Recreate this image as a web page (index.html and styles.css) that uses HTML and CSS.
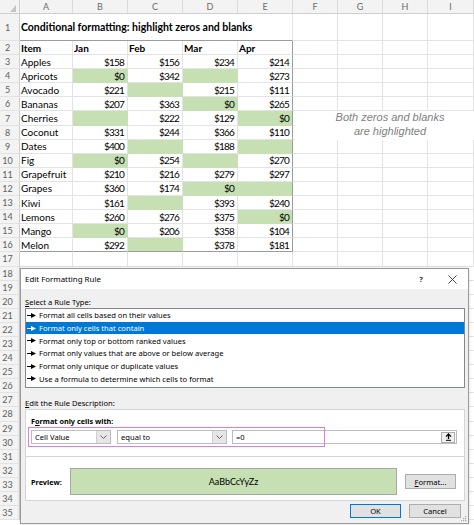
FILE: index.html
```html
<!DOCTYPE html>
<html>
<head>
<meta charset="utf-8">
<title>Conditional formatting</title>
<link rel="stylesheet" href="styles.css">
</head>
<body>
<div class="sheet">
  <div class="corner"><svg width="6" height="7" viewBox="0 0 6 7"><polygon points="6,0 6,7 0,7" fill="#c4c4c4"/></svg></div>
  <div class="ch">A</div><div class="ch">B</div><div class="ch">C</div><div class="ch">D</div><div class="ch">E</div><div class="ch">F</div><div class="ch">G</div><div class="ch">H</div><div class="ch">I</div>

  <div class="rh">1</div><div class="title">Conditional formatting: highlight zeros and blanks</div><div class="c"></div><div class="c"></div><div class="c"></div><div class="c"></div>

  <div class="rh">2</div><div class="c bold">Item</div><div class="c bold">Jan</div><div class="c bold">Feb</div><div class="c bold">Mar</div><div class="c bold e">Apr</div><div class="c"></div><div class="c"></div><div class="c"></div><div class="c"></div>

  <div class="rh">3</div><div class="c">Apples</div><div class="c n">$158</div><div class="c n">$156</div><div class="c n">$234</div><div class="c n e">$214</div><div class="c"></div><div class="c"></div><div class="c"></div><div class="c"></div>

  <div class="rh">4</div><div class="c">Apricots</div><div class="c n g">$0</div><div class="c n">$342</div><div class="c n g"></div><div class="c n e">$273</div><div class="c"></div><div class="c"></div><div class="c"></div><div class="c"></div>

  <div class="rh">5</div><div class="c">Avocado</div><div class="c n">$221</div><div class="c n g"></div><div class="c n">$215</div><div class="c n e">$111</div><div class="c"></div><div class="c"></div><div class="c"></div><div class="c"></div>

  <div class="rh">6</div><div class="c">Bananas</div><div class="c n">$207</div><div class="c n">$363</div><div class="c n g">$0</div><div class="c n e">$265</div><div class="c"></div><div class="c"></div><div class="c"></div><div class="c"></div>

  <div class="rh">7</div><div class="c">Cherries</div><div class="c n g"></div><div class="c n">$222</div><div class="c n">$129</div><div class="c n g e">$0</div><div class="c"></div><div class="c"></div><div class="c"></div><div class="c"></div>

  <div class="rh">8</div><div class="c">Coconut</div><div class="c n">$331</div><div class="c n">$244</div><div class="c n">$366</div><div class="c n e">$110</div><div class="c"></div><div class="c"></div><div class="c"></div><div class="c"></div>

  <div class="rh">9</div><div class="c">Dates</div><div class="c n">$400</div><div class="c n g"></div><div class="c n">$188</div><div class="c n g e"></div><div class="c"></div><div class="c"></div><div class="c"></div><div class="c"></div>

  <div class="rh">10</div><div class="c">Fig</div><div class="c n g">$0</div><div class="c n">$254</div><div class="c n g"></div><div class="c n e">$270</div><div class="c"></div><div class="c"></div><div class="c"></div><div class="c"></div>

  <div class="rh">11</div><div class="c">Grapefruit</div><div class="c n">$210</div><div class="c n">$216</div><div class="c n">$279</div><div class="c n e">$297</div><div class="c"></div><div class="c"></div><div class="c"></div><div class="c"></div>

  <div class="rh">12</div><div class="c">Grapes</div><div class="c n">$360</div><div class="c n">$174</div><div class="c n g">$0</div><div class="c n g e"></div><div class="c"></div><div class="c"></div><div class="c"></div><div class="c"></div>

  <div class="rh">13</div><div class="c">Kiwi</div><div class="c n">$161</div><div class="c n g"></div><div class="c n">$393</div><div class="c n e">$240</div><div class="c"></div><div class="c"></div><div class="c"></div><div class="c"></div>

  <div class="rh">14</div><div class="c">Lemons</div><div class="c n">$260</div><div class="c n">$276</div><div class="c n">$375</div><div class="c n g e">$0</div><div class="c"></div><div class="c"></div><div class="c"></div><div class="c"></div>

  <div class="rh">15</div><div class="c">Mango</div><div class="c n g">$0</div><div class="c n">$206</div><div class="c n">$358</div><div class="c n e">$104</div><div class="c"></div><div class="c"></div><div class="c"></div><div class="c"></div>

  <div class="rh">16</div><div class="c bot">Melon</div><div class="c n bot">$292</div><div class="c n g bot"></div><div class="c n bot">$378</div><div class="c n e bot">$181</div><div class="c"></div><div class="c"></div><div class="c"></div><div class="c"></div>

  <div class="rh">17</div><div class="c"></div><div class="c"></div><div class="c"></div><div class="c"></div><div class="c"></div><div class="c"></div><div class="c"></div><div class="c"></div><div class="c"></div>

  <div class="rh">18</div><div class="fill"></div>
  <div class="rh">19</div><div class="fill"></div>
  <div class="rh">20</div><div class="fill"></div>
  <div class="rh">21</div><div class="fill"></div>
  <div class="rh">22</div><div class="fill"></div>
  <div class="rh">23</div><div class="fill"></div>
  <div class="rh">24</div><div class="fill"></div>
  <div class="rh">25</div><div class="fill"></div>
  <div class="rh">26</div><div class="fill"></div>
  <div class="rh">27</div><div class="fill"></div>
  <div class="rh">28</div><div class="fill"></div>
  <div class="rh">29</div><div class="fill"></div>
  <div class="rh">30</div><div class="fill"></div>
  <div class="rh">31</div><div class="fill"></div>
  <div class="rh">32</div><div class="fill"></div>
  <div class="rh">33</div><div class="fill"></div>
  <div class="rh">34</div><div class="fill"></div>
  <div class="rh">35</div><div class="fill"></div>
</div>

<div class="note">Both zeros and blanks<br>are highlighted</div>

<div class="dlg">
  <div class="tbar">
    <div class="ttl">Edit Formatting Rule</div>
    <div class="help">?</div>
    <div class="close"><svg width="9" height="9" viewBox="0 0 9 9"><path d="M0.5 0.5 L8.5 8.5 M8.5 0.5 L0.5 8.5" stroke="#333" stroke-width="0.9" fill="none"/></svg></div>
  </div>
  <div class="body">
    <div class="lbl"><u>S</u>elect a Rule Type:</div>
    <div class="list">
      <div class="item"><svg class="arr" width="9" height="5" viewBox="0 0 9 5"><path d="M0 2.5 H5" stroke="currentColor" stroke-width="1"/><polygon points="4,0 9,2.5 4,5" fill="currentColor"/></svg>Format all cells based on their values</div>
      <div class="item sel"><svg class="arr" width="9" height="5" viewBox="0 0 9 5"><path d="M0 2.5 H5" stroke="currentColor" stroke-width="1"/><polygon points="4,0 9,2.5 4,5" fill="currentColor"/></svg>Format only cells that contain</div>
      <div class="item"><svg class="arr" width="9" height="5" viewBox="0 0 9 5"><path d="M0 2.5 H5" stroke="currentColor" stroke-width="1"/><polygon points="4,0 9,2.5 4,5" fill="currentColor"/></svg>Format only top or bottom ranked values</div>
      <div class="item"><svg class="arr" width="9" height="5" viewBox="0 0 9 5"><path d="M0 2.5 H5" stroke="currentColor" stroke-width="1"/><polygon points="4,0 9,2.5 4,5" fill="currentColor"/></svg>Format only values that are above or below average</div>
      <div class="item"><svg class="arr" width="9" height="5" viewBox="0 0 9 5"><path d="M0 2.5 H5" stroke="currentColor" stroke-width="1"/><polygon points="4,0 9,2.5 4,5" fill="currentColor"/></svg>Format only unique or duplicate values</div>
      <div class="item"><svg class="arr" width="9" height="5" viewBox="0 0 9 5"><path d="M0 2.5 H5" stroke="currentColor" stroke-width="1"/><polygon points="4,0 9,2.5 4,5" fill="currentColor"/></svg>Use a formula to determine which cells to format</div>
    </div>
    <div class="lbl lbl2"><u>E</u>dit the Rule Description:</div>
    <div class="group">
      <div class="glbl">F<u>o</u>rmat only cells with:</div>
      <div class="ctrls">
        <div class="combo c1"><span class="cv">Cell Value</span><span class="dd"><svg width="7" height="4" viewBox="0 0 7 4"><path d="M0.5 0.5 L3.5 3.5 L6.5 0.5" stroke="#555" stroke-width="0.9" fill="none"/></svg></span></div>
        <div class="combo c2"><span class="cv">equal to</span><span class="dd"><svg width="7" height="4" viewBox="0 0 7 4"><path d="M0.5 0.5 L3.5 3.5 L6.5 0.5" stroke="#555" stroke-width="0.9" fill="none"/></svg></span></div>
        <div class="tbox"><span class="cv">=0</span><span class="up"><svg width="7" height="8" viewBox="0 0 7 8"><path d="M3.5 6 V1.5" stroke="#000" stroke-width="1.3"/><path d="M1 3.6 L3.5 1 L6 3.6" stroke="#000" stroke-width="1.3" fill="none"/><path d="M1 7.3 H6" stroke="#000" stroke-width="1"/></svg></span></div>
      </div>
      <div class="mag"></div>
      <div class="sep"></div>
      <div class="prow">
        <div class="plbl">Preview:</div>
        <div class="pbox">AaBbCcYyZz</div>
        <div class="btn fmt"><u>F</u>ormat...</div>
      </div>
    </div>
    <div class="btns">
      <div class="btn ok">OK</div>
      <div class="btn">Cancel</div>
    </div>
  </div>
  <svg class="grip" width="6" height="6" viewBox="0 0 6 6"><rect x="4" y="0" width="1.2" height="1.2" fill="#aaa"/><rect x="2" y="2" width="1.2" height="1.2" fill="#aaa"/><rect x="4" y="2" width="1.2" height="1.2" fill="#aaa"/><rect x="0" y="4" width="1.2" height="1.2" fill="#aaa"/><rect x="2" y="4" width="1.2" height="1.2" fill="#aaa"/><rect x="4" y="4" width="1.2" height="1.2" fill="#aaa"/></svg>
</div>
</body>
</html>
```

FILE: styles.css
```css
* { box-sizing: border-box; margin: 0; padding: 0; }

body {
  width: 474px;
  height: 525px;
  overflow: hidden;
  position: relative;
  background: #fff;
  font-family: Lato, "Liberation Sans", sans-serif;
}

.sheet {
  display: grid;
  grid-template-columns: 20px 53px 55px 55px 55px 55px 45px 45px 45px 46px;
  grid-template-rows: 14px 27px repeat(34, 14.1px);
  font-size: 10px;
  color: #000;
}

.corner {
  background: #f3f3f3;
  border-right: 1px solid #cfcfcf;
  border-bottom: 1px solid #cfcfcf;
  display: flex;
  align-items: flex-end;
  justify-content: flex-end;
  padding: 0 3px 1px 0;
}

.ch {
  background: #f3f3f3;
  border-right: 1px solid #dadada;
  border-bottom: 1px solid #cfcfcf;
  color: #6a6a6a;
  font-size: 9px;
  display: flex;
  align-items: center;
  justify-content: center;
}

.rh {
  background: #f3f3f3;
  border-right: 1px solid #cfcfcf;
  border-bottom: 1px solid #e2e2e2;
  color: #606060;
  font-size: 9px;
  display: flex;
  align-items: center;
  justify-content: center;
  padding-right: 4px;
}

.c {
  border-right: 1px solid #e3e3e3;
  border-bottom: 1px solid #e3e3e3;
  display: flex;
  align-items: center;
  padding: 0 3px 0 1px;
  white-space: nowrap;
}

.n {
  justify-content: flex-end;
  letter-spacing: -0.8px;
}

.bold { font-weight: 700; }

.g {
  background: #c6e0b4;
  border-color: #c6e0b4;
}

.title {
  grid-column: span 5;
  font-weight: 700;
  font-size: 10.5px;
  border-bottom: 1px solid #9c9c9c;
  border-right: 1px solid #e3e3e3;
  display: flex;
  align-items: center;
  padding-left: 1px;
  white-space: nowrap;
}

.e { border-right-color: #9c9c9c; }
.bot { border-bottom-color: #9c9c9c; }

.fill {
  grid-column: span 9;
  border-bottom: 1px solid #e3e3e3;
}

.note {
  position: absolute;
  left: 295px;
  top: 111px;
  width: 190px;
  height: 29px;
  background: #fff;
  color: #808080;
  font-family: "Liberation Sans", Arial, sans-serif;
  font-style: italic;
  font-size: 11px;
  line-height: 13.5px;
  text-align: center;
}

/* dialog */
.dlg {
  position: absolute;
  left: 20px;
  top: 268px;
  width: 449px;
  height: 256px;
  background: #f0f0f0;
  border: 1px solid #9a9a9a;
  box-shadow: 0 0 3px rgba(0, 0, 0, 0.15);
  font-family: "Noto Sans", sans-serif;
  font-size: 7.6px;
  color: #000;
}

.tbar {
  height: 20px;
  background: #fff;
  display: flex;
  align-items: center;
  padding: 0 9px 0 4px;
}

.ttl { flex: 1; font-size: 7.9px; }

.help {
  width: 14px;
  text-align: center;
  font-weight: 700;
  font-size: 7.5px;
  color: #333;
  margin-right: 17px;
}

.close {
  width: 14px;
  display: flex;
  justify-content: center;
}

.body { padding: 0 3px 0 4px; }

.lbl {
  margin-top: 7px;
  height: 12px;
  line-height: 12px;
}

.lbl2 { margin-top: 9px; }

.list {
  height: 80px;
  background: #fff;
  border: 1px solid #828790;
}

.item {
  height: 12.7px;
  display: flex;
  align-items: center;
  padding-left: 1px;
  white-space: nowrap;
}

.arr { margin-right: 3px; flex: none; }

.sel {
  background: #0078d7;
  color: #fff;
}

.group {
  position: relative;
  height: 92px;
  background: #fff;
  border: 1px solid #d5d5d5;
}

.glbl {
  margin: 5px 0 0 5px;
  height: 12px;
  line-height: 12px;
  font-weight: 700;
  font-size: 7.3px;
}

.ctrls {
  display: flex;
  margin: 3px 0 0 5px;
  height: 14px;
}

.combo {
  display: flex;
  align-items: center;
  background: #fff;
  border: 1px solid #bcbcbc;
}

.c1 { width: 80px; }
.c2 { width: 110px; margin-left: 6px; }

.cv { flex: 1; padding-left: 3px; white-space: nowrap; }

.dd {
  width: 14px;
  height: 100%;
  background: #e6e6e6;
  border-left: 1px solid #cfcfcf;
  display: flex;
  align-items: center;
  justify-content: center;
}

.tbox {
  width: 225px;
  margin-left: 5px;
  display: flex;
  align-items: center;
  border: 1px solid #bcbcbc;
  background: #fff;
}

.up {
  width: 14px;
  height: 11px;
  margin-right: 1px;
  background: #f0f0f0;
  border: 1px solid #adadad;
  display: flex;
  align-items: center;
  justify-content: center;
}

.mag {
  position: absolute;
  left: 2px;
  top: 17px;
  width: 297px;
  height: 20px;
  border: 1px solid #e27be2;
}

.sep {
  margin-top: 12px;
  height: 1px;
  background: #d5d5d5;
}

.prow {
  display: flex;
  align-items: center;
  margin-top: 11px;
  height: 27px;
}

.plbl {
  width: 44px;
  padding-left: 5px;
  font-weight: 700;
  font-size: 7.3px;
}

.pbox {
  width: 327px;
  height: 27px;
  background: #c6e0b4;
  border: 1px solid #a6a6a6;
  display: flex;
  align-items: center;
  justify-content: center;
  font-family: Lato, sans-serif;
  font-size: 9px;
}

.btn {
  width: 52px;
  height: 14px;
  background: #e1e1e1;
  border: 1px solid #adadad;
  display: flex;
  align-items: center;
  justify-content: center;
}

.fmt {
  width: 51px;
  height: 15px;
  margin-left: 8px;
}

.btns {
  display: flex;
  justify-content: flex-end;
  gap: 8px;
  margin-top: 3px;
  padding-right: 4px;
}

.ok {
  width: 51px;
  border-color: #0078d7;
}

.grip {
  position: absolute;
  right: 1px;
  bottom: 1px;
}
```
